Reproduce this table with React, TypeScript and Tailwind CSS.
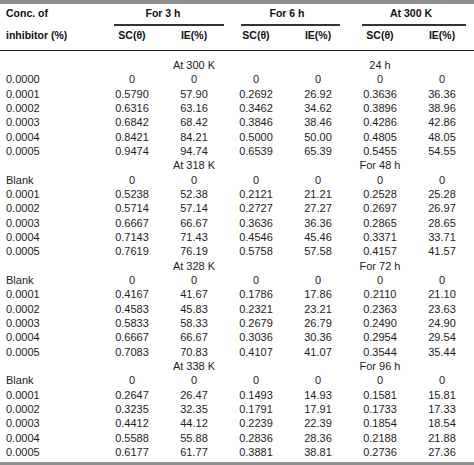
import React from "react";

type Section = {
  temp: string;
  time: string;
  first: string;
  rows: string[][];
};

const sections: Section[] = [
  {
    temp: "At 300 K",
    time: "24 h",
    first: "0.0000",
    rows: [
      ["0.0001", "0.5790", "57.90", "0.2692", "26.92", "0.3636", "36.36"],
      ["0.0002", "0.6316", "63.16", "0.3462", "34.62", "0.3896", "38.96"],
      ["0.0003", "0.6842", "68.42", "0.3846", "38.46", "0.4286", "42.86"],
      ["0.0004", "0.8421", "84.21", "0.5000", "50.00", "0.4805", "48.05"],
      ["0.0005", "0.9474", "94.74", "0.6539", "65.39", "0.5455", "54.55"],
    ],
  },
  {
    temp: "At 318 K",
    time: "For 48 h",
    first: "Blank",
    rows: [
      ["0.0001", "0.5238", "52.38", "0.2121", "21.21", "0.2528", "25.28"],
      ["0.0002", "0.5714", "57.14", "0.2727", "27.27", "0.2697", "26.97"],
      ["0.0003", "0.6667", "66.67", "0.3636", "36.36", "0.2865", "28.65"],
      ["0.0004", "0.7143", "71.43", "0.4546", "45.46", "0.3371", "33.71"],
      ["0.0005", "0.7619", "76.19", "0.5758", "57.58", "0.4157", "41.57"],
    ],
  },
  {
    temp: "At 328 K",
    time: "For 72 h",
    first: "Blank",
    rows: [
      ["0.0001", "0.4167", "41.67", "0.1786", "17.86", "0.2110", "21.10"],
      ["0.0002", "0.4583", "45.83", "0.2321", "23.21", "0.2363", "23.63"],
      ["0.0003", "0.5833", "58.33", "0.2679", "26.79", "0.2490", "24.90"],
      ["0.0004", "0.6667", "66.67", "0.3036", "30.36", "0.2954", "29.54"],
      ["0.0005", "0.7083", "70.83", "0.4107", "41.07", "0.3544", "35.44"],
    ],
  },
  {
    temp: "At 338 K",
    time: "For 96 h",
    first: "Blank",
    rows: [
      ["0.0001", "0.2647", "26.47", "0.1493", "14.93", "0.1581", "15.81"],
      ["0.0002", "0.3235", "32.35", "0.1791", "17.91", "0.1733", "17.33"],
      ["0.0003", "0.4412", "44.12", "0.2239", "22.39", "0.1854", "18.54"],
      ["0.0004", "0.5588", "55.88", "0.2836", "28.36", "0.2188", "21.88"],
      ["0.0005", "0.6177", "61.77", "0.3881", "38.81", "0.2736", "27.36"],
    ],
  },
];

const cols = "grid grid-cols-[101px_repeat(6,62px)]";

const Row = ({ cells }: { cells: string[] }) => (
  <div className={`${cols} h-[14.33px] items-center`}>
    <div className="pl-[6px]">{cells[0]}</div>
    {cells.slice(1).map((c, i) => (
      <div key={i} className="text-center">
        {c}
      </div>
    ))}
  </div>
);

const App = () => {
  return (
    <div
      className="w-[474px] h-[465px] overflow-hidden bg-white text-[#1c1c1c] flex flex-col"
      style={{ fontFamily: '"Liberation Sans", Arial, sans-serif' }}
    >
      <div className="h-[4px] bg-[#8e8e8e] shrink-0" />

      {/* header */}
      <div className="text-[10.5px] font-bold text-[#111] shrink-0">
        <div className={`${cols} h-[21.5px]`}>
          <div className="pl-[6px] flex items-center pb-[1px]">Conc. of</div>
          <div className="col-span-2 flex flex-col">
            <div className="flex-1 flex items-center justify-center pb-[1px]">For 3 h</div>
            <div className="h-[1.5px] bg-[#333] ml-[13px] mr-[1px]" />
          </div>
          <div className="col-span-2 flex flex-col">
            <div className="flex-1 flex items-center justify-center pb-[1px]">For 6 h</div>
            <div className="h-[1.5px] bg-[#333] ml-[16px] mr-[9px]" />
          </div>
          <div className="col-span-2 flex flex-col">
            <div className="flex-1 flex items-center justify-center pb-[1px]">At 300 K</div>
            <div className="h-[1.5px] bg-[#333] ml-[13px] mr-[7px]" />
          </div>
        </div>
        <div className={`${cols} h-[24px] items-center pb-[3px]`}>
          <div className="pl-[6px]">inhibitor (%)</div>
          <div className="text-center">SC(θ)</div>
          <div className="text-center">IE(%)</div>
          <div className="text-center">SC(θ)</div>
          <div className="text-center">IE(%)</div>
          <div className="text-center">SC(θ)</div>
          <div className="text-center">IE(%)</div>
        </div>
        <div className="h-[1.5px] bg-[#222]" />
      </div>

      {/* body */}
      <div className="text-[11px] pt-[6px] shrink-0">
        {sections.map((s) => (
          <div key={s.temp}>
            <div className={`${cols} h-[14.33px] items-center`}>
              <div />
              <div />
              <div className="text-center whitespace-nowrap">{s.temp}</div>
              <div />
              <div />
              <div className="text-center whitespace-nowrap">{s.time}</div>
              <div />
            </div>
            <Row cells={[s.first, "0", "0", "0", "0", "0", "0"]} />
            {s.rows.map((r) => (
              <Row key={r[0]} cells={r} />
            ))}
          </div>
        ))}
      </div>

      <div className="flex-1" />
      <div className="h-[3px] bg-[#8e8e8e] shrink-0" />
    </div>
  );
};

export default App;
